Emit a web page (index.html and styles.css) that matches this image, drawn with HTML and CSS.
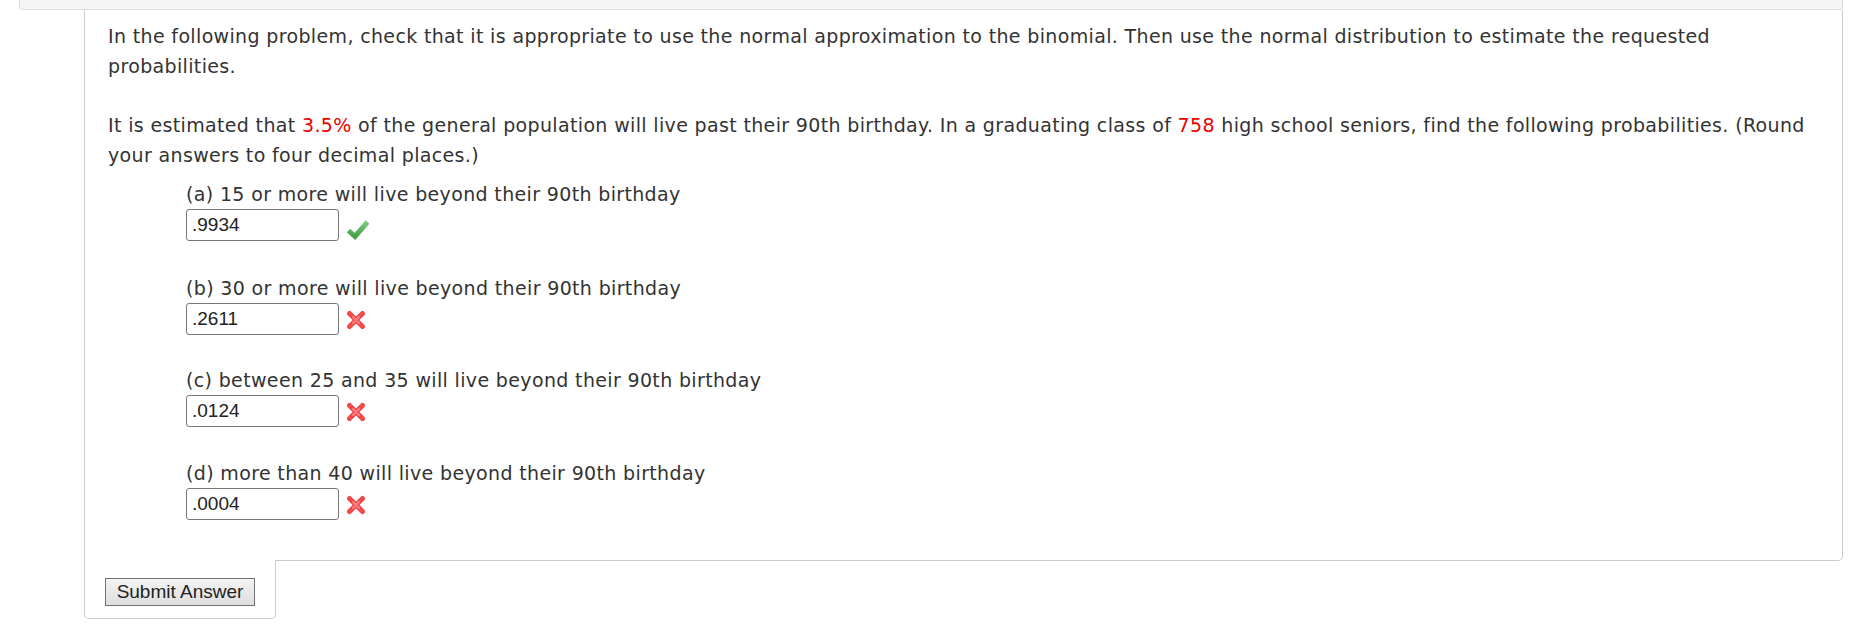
FILE: index.html
```html
<!DOCTYPE html>
<html>
<head>
<meta charset="utf-8">
<link rel="stylesheet" href="styles.css">
</head>
<body>
<div class="topbar"></div>
<div class="card">
  <p class="para">In the following problem, check that it is appropriate to use the normal approximation to the binomial. Then use the normal distribution to estimate the requested probabilities.</p>
  <p class="para para-second">It is estimated that <span class="red">3.5%</span> of the general population will live past their 90th birthday. In a graduating class of <span class="red">758</span> high school seniors, find the following probabilities. (Round your answers to four decimal places.)</p>
  <div class="items">
    <div class="item">
      <div class="label">(a) 15 or more will live beyond their 90th birthday</div>
      <div class="row">
        <input class="answer" type="text" value=".9934">
        <svg class="icon icon-check" width="26" height="26" viewBox="0 0 26 26">
          <defs>
            <linearGradient id="gck" x1="0" y1="0" x2="0" y2="1">
              <stop offset="0" stop-color="#7ccb7c"/>
              <stop offset="1" stop-color="#43a043"/>
            </linearGradient>
          </defs>
          <polyline points="3.5,14.5 10,20.5 22.5,6" fill="none" stroke="url(#gck)" stroke-width="5" stroke-linejoin="miter"/>
        </svg>
      </div>
    </div>
    <div class="item">
      <div class="label">(b) 30 or more will live beyond their 90th birthday</div>
      <div class="row">
        <input class="answer" type="text" value=".2611">
        <svg class="icon icon-x" width="20" height="20" viewBox="0 0 20 20">
          <path d="M3.5 3.5 L16.5 16.5 M16.5 3.5 L3.5 16.5" stroke="#f24a4a" stroke-width="5" stroke-linecap="round"/>
          <path d="M7 7 L13 13 M13 7 L7 13" stroke="#ff8080" stroke-width="2" stroke-linecap="round"/>
        </svg>
      </div>
    </div>
    <div class="item">
      <div class="label">(c) between 25 and 35 will live beyond their 90th birthday</div>
      <div class="row">
        <input class="answer" type="text" value=".0124">
        <svg class="icon icon-x" width="20" height="20" viewBox="0 0 20 20">
          <path d="M3.5 3.5 L16.5 16.5 M16.5 3.5 L3.5 16.5" stroke="#f24a4a" stroke-width="5" stroke-linecap="round"/>
          <path d="M7 7 L13 13 M13 7 L7 13" stroke="#ff8080" stroke-width="2" stroke-linecap="round"/>
        </svg>
      </div>
    </div>
    <div class="item">
      <div class="label">(d) more than 40 will live beyond their 90th birthday</div>
      <div class="row">
        <input class="answer" type="text" value=".0004">
        <svg class="icon icon-x" width="20" height="20" viewBox="0 0 20 20">
          <path d="M3.5 3.5 L16.5 16.5 M16.5 3.5 L3.5 16.5" stroke="#f24a4a" stroke-width="5" stroke-linecap="round"/>
          <path d="M7 7 L13 13 M13 7 L7 13" stroke="#ff8080" stroke-width="2" stroke-linecap="round"/>
        </svg>
      </div>
    </div>
  </div>
</div>
<div class="tab">
  <button class="submit" type="button">Submit Answer</button>
</div>
</body>
</html>
```
FILE: styles.css
```css
html, body {
  margin: 0;
  padding: 0;
  background: #ffffff;
}

body {
  font-family: "DejaVu Sans", Verdana, sans-serif;
  font-size: 19px;
  letter-spacing: 0.35px;
  color: #333333;
}

.topbar {
  height: 9px;
  margin: 0 14px 0 19px;
  background: #f5f5f5;
  border: 1px solid #dddddd;
  border-top: none;
  border-radius: 0 0 4px 4px;
}

.card {
  margin: 0 14px 0 84px;
  padding: 11px 23px 9px 23px;
  border: 1px solid #cccccc;
  border-top: none;
  border-radius: 0 0 5px 0;
}

.para {
  margin: 0;
  line-height: 30px;
}

.para-second {
  margin-top: 29px;
}

.red {
  color: #ee0000;
}

.items {
  margin-top: 9px;
  padding-left: 78px;
}

.item {
  margin-bottom: 30.7px;
}

.label {
  line-height: 30px;
}

.row {
  display: flex;
  align-items: flex-start;
  gap: 6px;
}

.answer {
  box-sizing: border-box;
  width: 153px;
  height: 32px;
  margin: 0;
  padding: 0 5px;
  font-family: "Liberation Sans", Arial, sans-serif;
  font-size: 19px;
  letter-spacing: 0;
  color: #222222;
  background: #ffffff;
  border: 1px solid #777777;
  border-radius: 3px;
}

.icon-check {
  margin-top: 7px;
}

.icon-x {
  margin-top: 7px;
  margin-left: 1px;
}

.tab {
  width: 150px;
  margin: -1px 0 0 84px;
  padding: 18px 20px 12px 20px;
  background: #ffffff;
  border: 1px solid #cccccc;
  border-top: none;
  border-radius: 0 0 5px 5px;
}

.submit {
  display: block;
  box-sizing: border-box;
  width: 150px;
  height: 28px;
  margin: 0;
  padding: 0;
  font-family: "Liberation Sans", Arial, sans-serif;
  font-size: 19px;
  letter-spacing: 0;
  color: #222222;
  background: linear-gradient(#f4f4f4, #dedede);
  border: 1px solid #707070;
  border-radius: 0;
}
```
